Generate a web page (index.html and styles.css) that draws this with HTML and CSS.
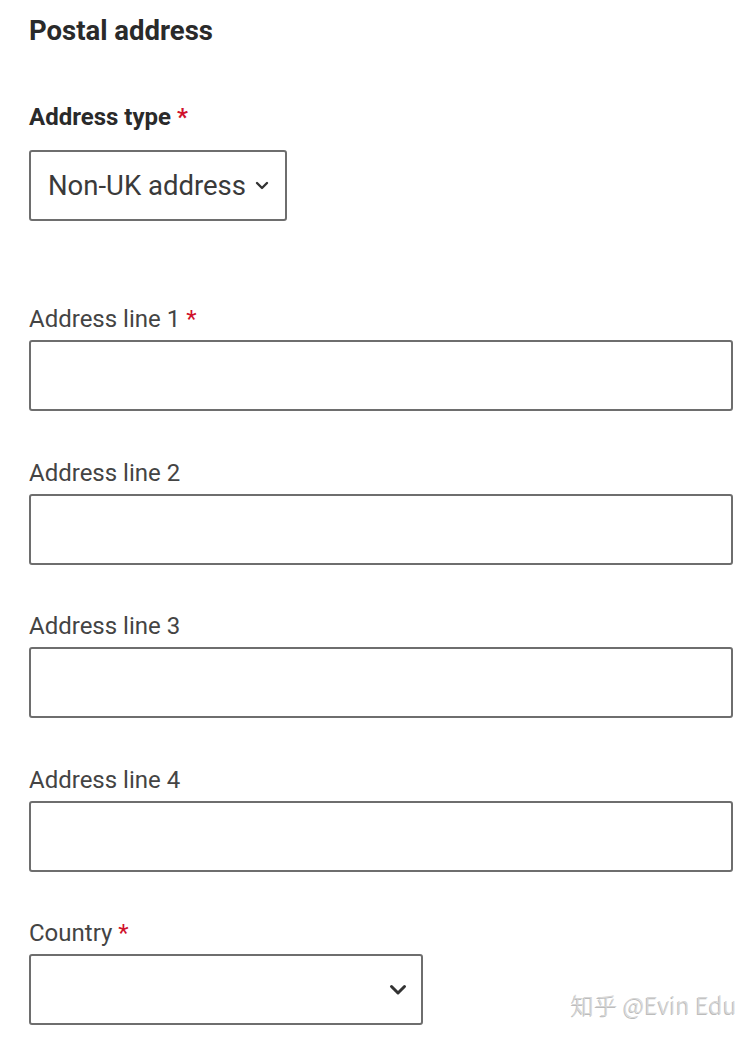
FILE: index.html
```html
<!DOCTYPE html>
<html lang="en">
<head>
<meta charset="utf-8">
<title>Postal address</title>
<link rel="stylesheet" href="styles.css">
</head>
<body>
<main class="page">
  <h2 class="section-title">Postal address</h2>
  <div class="type-field">
    <div class="type-label">Address type <span class="req">*</span></div>
    <div class="select select-type">
      <span class="select-value">Non-UK address</span>
      <svg class="chev-small" width="14" height="9" viewBox="0 0 14 9"><path d="M2 2 L7 7 L12 2" fill="none" stroke="#333" stroke-width="2.4" stroke-linecap="round" stroke-linejoin="round"/></svg>
    </div>
  </div>
  <div class="fields">
    <div class="field">
      <label class="label">Address line 1 <span class="req">*</span></label>
      <div class="input"></div>
    </div>
    <div class="field">
      <label class="label">Address line 2</label>
      <div class="input"></div>
    </div>
    <div class="field">
      <label class="label">Address line 3</label>
      <div class="input"></div>
    </div>
    <div class="field">
      <label class="label">Address line 4</label>
      <div class="input"></div>
    </div>
    <div class="field">
      <label class="label">Country <span class="req">*</span></label>
      <div class="select select-country">
        <svg class="chev" width="18" height="12" viewBox="0 0 18 12"><path d="M2.5 2.5 L9 9 L15.5 2.5" fill="none" stroke="#333" stroke-width="3" stroke-linecap="round" stroke-linejoin="round"/></svg>
      </div>
    </div>
  </div>
  <div class="watermark">知乎 @Evin Edu</div>
</main>
</body>
</html>
```
FILE: styles.css
```css
* { box-sizing: border-box; }
html, body { margin: 0; padding: 0; background: #fff; }
body {
  font-family: Roboto, "Liberation Sans", Arial, sans-serif;
  color: #2b2b2b;
  width: 753px;
  height: 1038px;
  overflow: hidden;
}
.page {
  position: relative;
  padding: 16px 0 0 29px;
  height: 1038px;
}
.section-title {
  margin: 0;
  font-size: 27.5px;
  line-height: 30px;
  font-weight: 700;
  color: #2a2a2a;
}
.type-field {
  margin-top: 57px;
  display: flex;
  flex-direction: column;
  gap: 19px;
}
.type-label {
  font-size: 24px;
  line-height: 28px;
  font-weight: 700;
  color: #2a2a2a;
}
.req { color: #d0112b; font-weight: 700; }
.label .req { font-weight: 400; }
.select {
  height: 71px;
  border: 2px solid #6e6e6e;
  border-radius: 3px;
  display: flex;
  align-items: center;
  background: #fff;
}
.select-type {
  width: 258px;
  padding: 0 16px 0 17px;
  justify-content: space-between;
}
.select-value {
  font-size: 27.5px;
  color: #3a3a3a;
  font-weight: 400;
}
.select-country {
  width: 394px;
  justify-content: flex-end;
  padding-right: 14px;
}
.fields {
  margin-top: 84px;
  display: flex;
  flex-direction: column;
  gap: 47.5px;
}
.field {
  display: flex;
  flex-direction: column;
  gap: 7px;
}
.label {
  font-size: 24px;
  line-height: 28px;
  color: #444;
}
.input {
  width: 704px;
  height: 71px;
  border: 2px solid #6e6e6e;
  border-radius: 3px;
  background: #fff;
}
.watermark {
  position: absolute;
  left: 571px;
  top: 989px;
  font-family: "Noto Sans CJK SC", "Liberation Sans", sans-serif;
  font-size: 23px;
  line-height: 30px;
  font-weight: 300;
  color: #d6d6d6;
  text-shadow: -1px 1px 0 #bcbcbc;
  letter-spacing: 0.4px;
  white-space: nowrap;
}
```
